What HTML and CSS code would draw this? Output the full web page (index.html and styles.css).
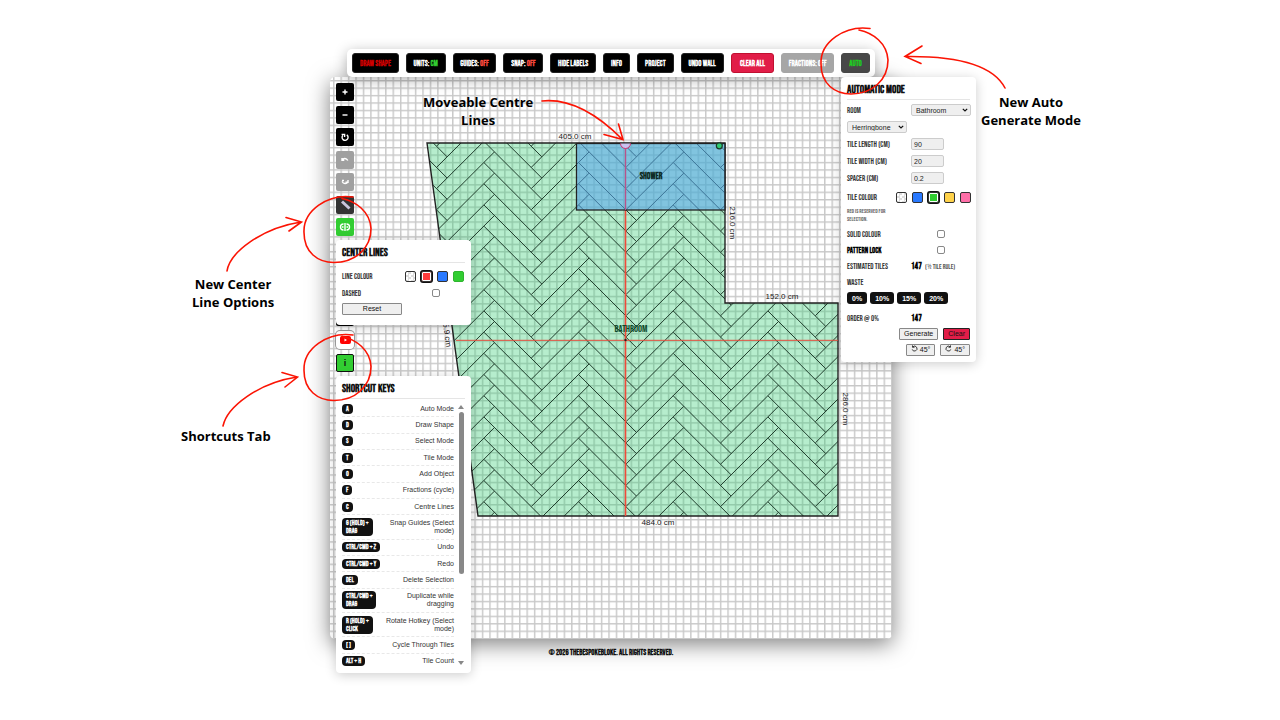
FILE: index.html
```html
<!DOCTYPE html>
<html lang="en">
<head>
    <meta charset="UTF-8">
    <meta name="viewport" content="width=device-width, initial-scale=1.0">
    <title>Tile Planner</title>
    <link rel="stylesheet" href="styles.css">
</head>
<body>

<main class="stage">
<div class="app">

    <header class="topbar">
        <button type="button" class="draw">Draw Shape</button>
        <button type="button">Units: <span class="on">CM</span></button>
        <button type="button">Guides: <span class="off">OFF</span></button>
        <button type="button">Snap: <span class="off">OFF</span></button>
        <button type="button">Hide Labels</button>
        <button type="button">Info</button>
        <button type="button">Project</button>
        <button type="button">Undo Wall</button>
        <button type="button" class="danger">Clear All</button>
        <button type="button" class="muted">Fractions: OFF</button>
        <button type="button" class="auto">Auto</button>
    </header>

    <section class="board">
        <svg class="plan" viewBox="330 77 562 562">
            <defs>
                <!-- one grid square is 10cm -->
                <pattern id="grid" width="10" height="10" patternUnits="userSpaceOnUse" patternTransform="translate(333 80) scale(.744)">
                    <path d="M0 1H10M1 0V10" fill="none" stroke="#c8c8c8" stroke-width="1.9"/>
                </pattern>
                <clipPath id="room"><path d="M427 143H725V303H838V516H478Z"/></clipPath>
            </defs>
            <rect x="330" y="77" width="562" height="562" fill="url(#grid)"/>
            <path d="M427 143H725V303H838V516H478Z" fill="#2ecc71" fill-opacity=".35"/>
            <path id="tiles" clip-path="url(#room)" fill="none" stroke="#1f3d2c" stroke-width="1"/>
            <path d="M427 143H725V303H838V516H478Z" fill="none" stroke="#222" stroke-width="1.4"/>
            <path d="M456 340.3H838" stroke="#e74c3c" stroke-width="1.2" stroke-opacity=".8"/>
            <path d="M625.5 143V516" stroke="#f04a3a" stroke-width="1.6"/>
            <rect x="576.5" y="143.5" width="148.5" height="66.5" fill="#55a2ee" fill-opacity=".55" stroke="#222" stroke-width="1.3"/>
            <path d="M625.5 144V210" stroke="#b8528c" stroke-width="1"/>
            <path d="M620.5 143.5a5 5 0 0 0 10 0" fill="#c9c3f0" stroke="#d2336f" stroke-width="1"/>
            <circle cx="719.3" cy="145.8" r="3" fill="#2ecc71" stroke="#1c3b2a" stroke-width="1.2"/>
            <circle cx="625.5" cy="340" r="1.2" fill="#222"/>
            <g class="dims">
                <text x="575" y="139">405.0 cm</text>
                <text x="782" y="299">152.0 cm</text>
                <text x="658" y="525">484.0 cm</text>
                <text transform="translate(730 223) rotate(90)">216.0 cm</text>
                <text transform="translate(843 409) rotate(90)">286.0 cm</text>
                <text transform="translate(444 331) rotate(82)">505.9 cm</text>
            </g>
            <text class="room-name" x="651" y="179">SHOWER</text>
            <text class="room-name big" x="631" y="332">BATHROOM</text>
        </svg>

        <nav class="tools">
            <div class="tools-view">
                <button type="button" aria-label="Zoom in"><svg viewBox="0 0 18 18"><path d="M9 6.5V11.5M6.5 9H11.5"/></svg></button>
                <button type="button" aria-label="Zoom out"><svg viewBox="0 0 18 18"><path d="M6.5 9H11.5"/></svg></button>
                <button type="button" aria-label="Reset view"><svg viewBox="0 0 18 18"><path d="M10.8 6.9A3 3 0 1 1 6.9 7.3M5.6 6.4H8.6V9"/></svg></button>
                <button type="button" class="dim" aria-label="Undo"><svg viewBox="0 0 18 18"><path d="M6 9C7.5 7 10.5 7 11.8 9.5M6 7V9.3H8.3"/></svg></button>
                <button type="button" class="dim" aria-label="Redo"><svg viewBox="0 0 18 18"><path d="M6 8.5C7.5 11 10.5 11 11.8 9M12 7V9.3H9.5M6 7.5H8"/></svg></button>
                <button type="button" class="ruler" aria-label="Measure"><svg viewBox="0 0 18 18"><path d="M6 5.5L13.5 12.5"/></svg></button>
                <button type="button" class="green" aria-label="Center lines"><svg viewBox="0 0 18 18"><path d="M9 5V13M7.5 6A3 3 0 0 0 7.5 12M10.5 6A3 3 0 0 1 10.5 12M6 9H7.5M10.5 9H12"/></svg></button>
            </div>
            <div class="tools-help">
                <button type="button" aria-label="More"></button>
                <button type="button" class="tube" aria-label="Video guide"><svg viewBox="0 0 18 18"><rect x="4" y="5" width="11" height="8" rx="2"/><path d="M8.5 7.5L11 9L8.5 10.5Z"/></svg></button>
                <button type="button" class="info">i</button>
            </div>
        </nav>

        <aside class="panel lines">
            <h2>Center Lines</h2>
            <div class="row split">
                <span>Line Colour</span>
                <div class="swatches">
                    <button type="button" class="sw clear" aria-label="None"></button>
                    <button type="button" class="sw red picked" aria-label="Red"></button>
                    <button type="button" class="sw blue" aria-label="Blue"></button>
                    <button type="button" class="sw lime bare" aria-label="Green"></button>
                </div>
            </div>
            <div class="row">
                <label for="dashed">Dashed</label>
                <input type="checkbox" id="dashed">
            </div>
            <button type="button" class="plain wide">Reset</button>
        </aside>

        <aside class="panel keys">
            <h2>Shortcut Keys</h2>
            <div class="keys-body">
                <ul>
                    <li><kbd>A</kbd><span>Auto Mode</span></li>
                    <li><kbd>D</kbd><span>Draw Shape</span></li>
                    <li><kbd>S</kbd><span>Select Mode</span></li>
                    <li><kbd>T</kbd><span>Tile Mode</span></li>
                    <li><kbd>O</kbd><span>Add Object</span></li>
                    <li><kbd>F</kbd><span>Fractions (cycle)</span></li>
                    <li><kbd>C</kbd><span>Centre Lines</span></li>
                    <li><kbd>G (hold) +<br>Drag</kbd><span>Snap Guides (Select<br>mode)</span></li>
                    <li><kbd>Ctrl/Cmd + Z</kbd><span>Undo</span></li>
                    <li><kbd>Ctrl/Cmd + Y</kbd><span>Redo</span></li>
                    <li><kbd>Del</kbd><span>Delete Selection</span></li>
                    <li><kbd>Ctrl/Cmd +<br>Drag</kbd><span>Duplicate while<br>dragging</span></li>
                    <li><kbd>R (hold) +<br>Click</kbd><span>Rotate Hotkey (Select<br>mode)</span></li>
                    <li><kbd>[ ]</kbd><span>Cycle Through Tiles</span></li>
                    <li><kbd>Alt + H</kbd><span>Tile Count</span></li>
                </ul>
                <div class="scroll">
                    <i class="up"></i>
                    <i class="thumb"></i>
                    <i class="down"></i>
                </div>
            </div>
        </aside>

        <aside class="panel auto-mode">
            <h2>Automatic Mode</h2>
            <div class="fields">
                <div class="row">
                    <label for="roomType">Room</label>
                    <select id="roomType"><option>Bathroom</option></select>
                </div>
                <div class="row">
                    <select aria-label="Pattern"><option>Herringbone</option></select>
                </div>
                <div class="row">
                    <label for="len">Tile Length (cm)</label>
                    <input type="text" id="len" value="90">
                </div>
                <div class="row">
                    <label for="wid">Tile Width (cm)</label>
                    <input type="text" id="wid" value="20">
                </div>
                <div class="row">
                    <label for="gap">Spacer (cm)</label>
                    <input type="text" id="gap" value="0.2">
                </div>
                <div class="row split colour">
                    <span>Tile Colour</span>
                    <div class="swatches">
                        <button type="button" class="sw clear" aria-label="None"></button>
                        <button type="button" class="sw blue" aria-label="Blue"></button>
                        <button type="button" class="sw lime picked" aria-label="Green"></button>
                        <button type="button" class="sw yellow" aria-label="Yellow"></button>
                        <button type="button" class="sw pink" aria-label="Pink"></button>
                    </div>
                </div>
                <p class="note">Red is reserved for<br>selection.</p>
            </div>
            <div class="fields tight">
                <div class="row">
                    <label for="solid">Solid Colour</label>
                    <input type="checkbox" id="solid">
                </div>
                <div class="row">
                    <label for="lock" class="strong">Pattern Lock</label>
                    <input type="checkbox" id="lock">
                </div>
                <div class="row">
                    <span>Estimated Tiles</span>
                    <div class="count"><b>147</b> <small>(½ tile rule)</small></div>
                </div>
                <div class="row"><span>Waste</span></div>
                <div class="waste">
                    <button type="button">0%</button>
                    <button type="button">10%</button>
                    <button type="button">15%</button>
                    <button type="button">20%</button>
                </div>
                <div class="row order">
                    <span>Order @ 0%</span>
                    <div class="count"><b>147</b></div>
                </div>
                <div class="actions">
                    <button type="button" class="plain">Generate</button>
                    <button type="button" class="plain wipe">Clear</button>
                </div>
                <div class="actions">
                    <button type="button" class="plain"><svg viewBox="0 0 8 8"><path d="M2.2 2A2.8 2.8 0 1 1 1.4 5M1.7 .4V2.6H4"/></svg>45°</button>
                    <button type="button" class="plain"><svg viewBox="0 0 8 8"><path d="M5.8 2A2.8 2.8 0 1 0 6.6 5M6.3 .4V2.6H4"/></svg>45°</button>
                </div>
            </div>
        </aside>
    </section>

    <footer>© 2026 TheBespokeBloke. All rights reserved.</footer>

    <!-- callouts -->
    <svg class="marks" viewBox="330 49 562 590">
        <defs>
            <path id="ring" d="M870 28.5C845 25 820 42 821 64C821 84 835 94 851 94C872 94 888 80 888 60C887 43 873 33 859 30"/>
        </defs>
        <use href="#ring"/>
        <use href="#ring" x="-517" y="168.5"/>
        <use href="#ring" x="-517" y="306.5"/>
        <path d="M542 101C571 98 598 115 622 139M604 134.5L623 139.5L618.5 124"/>
        <path d="M1005 88C992 63 950 56 906 56.5M922 46L905 56.5L921 63.5"/>
        <path d="M227 271C230 252 262 228 301 222M286 217.5L301.5 222L289 231"/>
        <path d="M223 426C227 407 258 383 297 377M282 372.5L297.5 377L285 387"/>
    </svg>
    <p class="callout c-lines">Moveable Centre<br>Lines</p>
    <p class="callout c-options">New Center<br>Line Options</p>
    <p class="callout c-keys">Shortcuts Tab</p>
    <p class="callout c-auto">New Auto<br>Generate Mode</p>

</div>
</main>

<script src="plan.js"></script>
</body>
</html>
```
FILE: styles.css
```css
*{
    box-sizing: border-box;
}
body{
    margin: 0;
    background-color: #fff;
    color: #111;
    font-family: "Liberation Sans", Arial, sans-serif;
    font-size: 7px;
    overflow-x: hidden;
}
button, input, select{
    font-family: inherit;
    font-size: inherit;
    margin: 0;
    padding: 0;
}
h2, p, ul{
    margin: 0;
    padding: 0;
}
.stage{
    display: grid;
    grid-template-columns: 330fr 562px 388fr;
    min-height: 100vh;
}
.app{
    grid-column: 2;
    position: relative;
    padding-top: 49px;
}

/* top bar */
.topbar{
    display: grid;
    grid-template-columns: 47fr 40fr 44fr 40fr 46fr 27fr 37fr 43fr 44fr 53fr 29fr;
    gap: 7px;
    margin: 0 17px;
    padding: 4px 5px;
    border-radius: 5px;
    background-color: #fff;
    box-shadow: 0 3px 14px rgba(0, 0, 0, 0.3);
    position: relative;
    z-index: 1;
}
.topbar button{
    height: 20px;
    border: 1px solid #222;
    border-radius: 3px;
    background-color: #000;
    color: #fff;
    font-size: 8px;
    white-space: nowrap;
}
.topbar button, .panel, kbd, .room-name, footer{
    font-family: "Bebas Neue", "Liberation Sans Narrow", "Roboto Condensed", "Open Sans Condensed", "DejaVu Sans Condensed", sans-serif;
    font-weight: bold;
    text-transform: uppercase;
}
.topbar .draw{ color: #d00000; }
.on{ color: #32cd32; }
.off{ color: #ff4b3e; }
.topbar .danger{
    background-color: #e11d48;
    border-color: #c01030;
}
.topbar .muted{
    background-color: #a6a6a6;
    border-color: #a6a6a6;
}
.topbar .auto{
    background-color: #484848;
    border-color: #484848;
    color: #20cc20;
}

/* board */
.board{
    position: relative;
    border-radius: 5px;
    background-color: #fff;
    box-shadow: 0 5px 22px rgba(0, 0, 0, 0.5);
}
.plan{
    display: block;
    width: 100%;
    border-radius: 5px;
}
.dims{
    font-size: 8px;
    fill: #222;
    text-anchor: middle;
}
.room-name{
    font-size: 9px;
    fill: #0d2b24;
    text-anchor: middle;
}
.room-name.big{
    font-size: 10px;
    font-weight: normal;
    fill: #0d4a2a;
}

/* left tools */
.tools{
    position: absolute;
    top: 6px;
    left: 6px;
    width: 18px;
}
.tools-view, .tools-help{
    display: flex;
    flex-direction: column;
    justify-content: space-between;
    height: 153px;
}
.tools-help{
    height: 64px;
    margin-top: 72px;
}
.tools button{
    height: 18px;
    border: 0;
    border-radius: 2px;
    background-color: #000;
    color: #fff;
}
.tools svg{
    display: block;
    width: 18px;
    height: 18px;
    fill: none;
    stroke: #fff;
    stroke-width: 1.4;
}
.tools .dim{ background-color: #a0a0a0; }
.tools .ruler{ background-color: #333; }
.tools .ruler svg{
    stroke: #c9c6dc;
    stroke-width: 3;
}
.tools .green{ background-color: #32cd32; }
.tools .tube{
    background-color: #fff;
    border-radius: 4px;
    box-shadow: 0 0 0 1px #999;
}
.tools .tube rect{
    fill: #f00;
    stroke: none;
}
.tools .tube path{
    fill: #fff;
    stroke: none;
}
.tools .info{
    background-color: #32cd32;
    border: 1px solid #111;
    color: #111;
    font-size: 9px;
    font-weight: bold;
}

/* panels */
.panel{
    position: absolute;
    width: 135px;
    padding: 5px 6px 6px;
    border-radius: 4px;
    background-color: #fff;
    color: #333;
    font-size: 8px;
    font-weight: normal;
    box-shadow: 0 2px 12px rgba(0, 0, 0, 0.2);
}
.panel h2{
    padding-bottom: 1px;
    border-bottom: 1px solid #e5e5e5;
    color: #111;
    font-size: 11px;
    line-height: 16px;
}
.row{
    display: grid;
    grid-template-columns: 60px 1fr;
    column-gap: 4px;
    align-items: center;
    height: 12px;
    white-space: nowrap;
}
.split{
    display: flex;
    justify-content: space-between;
}
.strong{
    color: #000;
    font-weight: bold;
}
.row input, .row select{
    width: 33px;
    height: 12px;
    padding: 0 2px;
    border: 1px solid #ccc;
    border-radius: 2px;
    background-color: #efefef;
    color: #222;
    font-family: "Liberation Sans", Arial, sans-serif;
    font-size: 7px;
}
.row select{
    appearance: none;
    width: 60px;
    padding: 0 12px 0 4px;
    background: #efefef url("data:image/svg+xml,%3Csvg xmlns='http://www.w3.org/2000/svg' viewBox='0 0 6 6'%3E%3Cpath d='M.8 1.8L3 4L5.2 1.8' fill='none' stroke='%23111' stroke-width='1.2'/%3E%3C/svg%3E") no-repeat right 2px center / 6px 6px;
}
.row input[type="checkbox"]{
    appearance: none;
    width: 8px;
    height: 8px;
    margin-left: 26px;
    padding: 0;
    border: 1px solid #888;
    border-radius: 2px;
    background-color: #fff;
}
.swatches{
    display: flex;
    gap: 5px;
}
.sw{
    width: 11px;
    height: 11px;
    border: 1px solid #333;
    border-radius: 2px;
}
.clear{ background: repeating-conic-gradient(#ddd 0 25%, #fff 0 50%) 0 0 / 5px 5px; }
.red{ background-color: #ff3b3b; }
.blue{ background-color: #2979ff; }
.lime{ background-color: #32cd32; }
.yellow{ background-color: #ffd24a; }
.pink{ background-color: #ff6fa8; }
.bare{ border-color: #2fb52f; }
.picked{
    box-shadow: inset 0 0 0 1px #fff, 0 0 0 1px #111;
}

.lines{
    top: 163px;
    left: 6px;
    padding-bottom: 10px;
}
.lines .row{
    margin-top: 7px;
}
.lines .row + .row{
    margin-top: 5px;
}
.lines .split{
    padding-right: 1px;
}
.plain{
    height: 12px;
    padding: 0 4px;
    border: 1px solid #888;
    border-radius: 1px;
    background-color: #efefef;
    color: #111;
    font-family: "Liberation Sans", Arial, sans-serif;
    font-size: 7px;
    line-height: 10px;
}
.wide{
    display: block;
    width: 60px;
    margin-top: 4px;
}

.keys{
    top: 299px;
    left: 6px;
    padding-bottom: 4px;
}
.keys-body{
    display: flex;
    gap: 4px;
    height: 268px;
    margin-top: 2px;
    padding-right: 1px;
}
.keys ul{
    flex: 1;
    display: flex;
    flex-direction: column;
    list-style: none;
}
.keys li{
    flex: 1 1 auto;
    display: flex;
    justify-content: space-between;
    align-items: center;
    padding: 2px 0;
    border-bottom: 1px dashed #e8e8e8;
    color: #333;
    font-size: 7px;
    line-height: 8px;
    text-align: right;
}
.keys li:last-child{
    border-bottom: 0;
}
.keys li span{
    font-family: "Liberation Sans", Arial, sans-serif;
    text-transform: none;
}
kbd{
    padding: 1px 4px;
    border-radius: 4px;
    background-color: #111;
    color: #fff;
    font-size: 7px;
    line-height: 8px;
    text-align: left;
}
.scroll{
    display: flex;
    flex-direction: column;
    align-items: center;
    width: 6px;
    padding: 4px 0;
}
.up, .down{
    border: 3px solid transparent;
    border-top-width: 0;
    border-bottom: 4px solid #888;
}
.down{
    margin-top: auto;
    border-top: 4px solid #888;
    border-bottom-width: 0;
}
.thumb{
    width: 5px;
    height: 162px;
    margin-top: 3px;
    border-radius: 3px;
    background-color: #888;
}

.auto-mode{
    top: 0;
    left: 511px;
    z-index: 2;
}
.fields{
    display: grid;
    gap: 5px;
    margin-top: 4px;
}
.tight{
    gap: 4px;
}
.colour{
    margin-top: 2px;
}
.note{
    color: #666;
    font-size: 6px;
    line-height: 8px;
}
.count b{
    color: #000;
    font-size: 9px;
}
.count small{
    margin-left: 2px;
    color: #555;
    font-size: 7px;
}
.waste{
    display: flex;
    gap: 3px;
}
.waste button{
    height: 12px;
    padding: 0 5px;
    border: 0;
    border-radius: 3px;
    background-color: #111;
    color: #fff;
    font-family: "Liberation Sans", Arial, sans-serif;
    font-size: 7px;
    font-weight: bold;
}
.order{
    margin-top: 4px;
}
.actions{
    display: flex;
    justify-content: flex-end;
    gap: 5px;
}
.actions svg{
    width: 7px;
    height: 7px;
    margin-right: 2px;
    fill: none;
    stroke: #222;
    stroke-width: 1;
}
.wipe{
    background-color: #e11d48;
    border-color: #222;
}

footer{
    margin-top: 9px;
    font-size: 8px;
    line-height: 9px;
    text-align: center;
}

/* callouts */
.marks{
    position: absolute;
    top: 49px;
    left: 0;
    width: 562px;
    height: 590px;
    overflow: visible;
    fill: none;
    stroke: #fb1404;
    stroke-width: 1.6;
    stroke-linecap: round;
    z-index: 3;
    pointer-events: none;
}
.callout{
    position: absolute;
    z-index: 3;
    color: #000;
    font-family: "Open Sans", "Noto Sans", sans-serif;
    font-size: 13px;
    font-weight: bold;
    line-height: 18px;
    text-align: center;
    white-space: nowrap;
}
.c-lines{
    top: 93px;
    left: 93px;
}
.c-options{
    top: 275px;
    left: -138px;
}
.c-keys{
    top: 427px;
    left: -149px;
}
.c-auto{
    top: 93px;
    left: 651px;
}
```
FILE: plan.js
```js
// herringbone, 90 x 20 tiles laid at 45 degrees
const colW = 94.67;
const rowH = 21.2;
const run = 57.8;
const tiles = document.getElementById("tiles");

let d = "";
for(let c = -3; c <= 2; c++){
    for(let r = -5; r <= 20; r++){
        const x = 626 + c * colW;
        const y = 167.3 + r * rowH;
        d += `M${x} ${y}l${run} ${-run}`;
        d += `M${x + 47.3} ${y - 4.7}l${run} ${run}`;
    }
}
tiles.setAttribute("d", d);
```
